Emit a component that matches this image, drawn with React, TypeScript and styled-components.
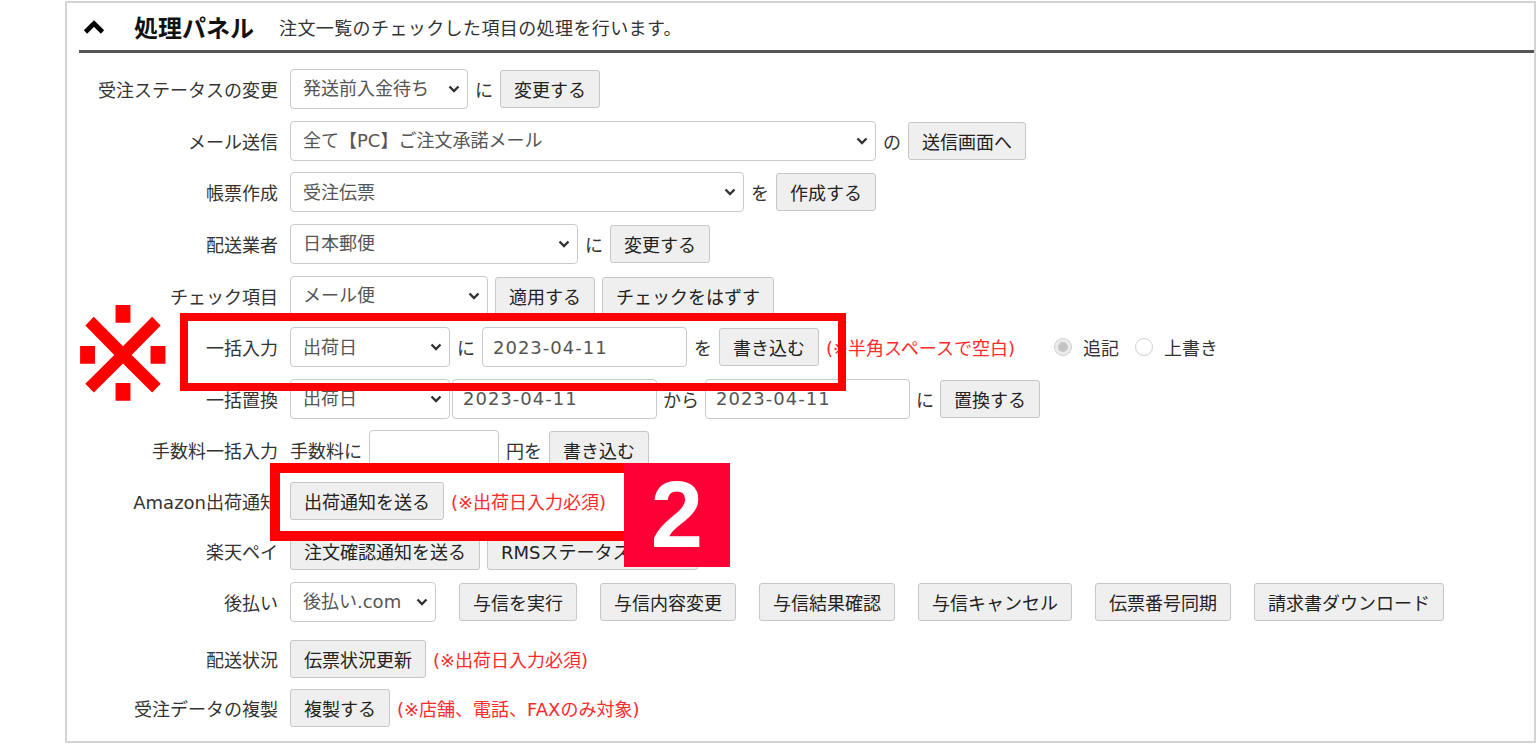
import React from 'react';
import styled, { createGlobalStyle } from 'styled-components';

const GlobalStyle = createGlobalStyle`
  html, body {
    margin: 0;
    padding: 0;
    background: #fff;
  }
  body {
    font-family: 'DejaVu Sans', 'Noto Sans CJK JP', sans-serif;
    font-size: 18px;
    color: #333;
  }
`;

const Page = styled.div`
  position: relative;
  width: 1536px;
  height: 744px;
  padding: 1px 0 0 65px;
  box-sizing: border-box;
  overflow: hidden;
`;

const Panel = styled.section`
  width: 1471px;
  height: 742px;
  box-sizing: border-box;
  border: 2px solid #d4d4d4;
`;

const Header = styled.div`
  display: flex;
  align-items: center;
  height: 47px;
  margin-left: 12px;
  padding-left: 4px;
  border-bottom: 3px solid #555;
`;

const Title = styled.h2`
  margin: 0 0 0 29px;
  font-family: 'Noto Sans CJK JP', sans-serif;
  font-size: 24px;
  font-weight: 700;
  color: #111;
`;

const SubTitle = styled.span`
  margin-left: 25px;
  font-size: 18px;
  letter-spacing: 0.4px;
  color: #333;
`;

const Body = styled.div`
  padding-top: 10px;
`;

const Row = styled.div<{ $h: number; $pb?: number }>`
  display: flex;
  align-items: center;
  height: ${(p) => p.$h}px;
  padding-bottom: ${(p) => p.$pb || 0}px;
`;

const Label = styled.div`
  width: 211px;
  flex-shrink: 0;
  margin-right: 12px;
  text-align: right;
  white-space: nowrap;
  color: #333;
`;

const Content = styled.div<{ $gap?: number }>`
  display: flex;
  align-items: center;
  gap: ${(p) => p.$gap ?? 7}px;
  white-space: nowrap;
`;

const Pair = styled.div`
  display: flex;
  align-items: center;
  gap: 2px;
`;

const SelectWrap = styled.div<{ $w: number }>`
  position: relative;
  width: ${(p) => p.$w}px;
  height: 40px;
  flex-shrink: 0;
`;

const Select = styled.select`
  appearance: none;
  width: 100%;
  height: 100%;
  box-sizing: border-box;
  padding: 0 30px 0 12px;
  border: 1px solid #c9c9c9;
  border-radius: 4px;
  background: #fff;
  font: inherit;
  color: #555;
`;

const Caret = styled.svg`
  position: absolute;
  right: 8px;
  top: 50%;
  margin-top: -4px;
  pointer-events: none;
`;

const Input = styled.input<{ $w: number }>`
  width: ${(p) => p.$w}px;
  height: 40px;
  box-sizing: border-box;
  padding: 0 10px;
  border: 1px solid #c9c9c9;
  border-radius: 4px;
  font: inherit;
  letter-spacing: 1px;
  color: #555;
  flex-shrink: 0;
`;

const Button = styled.button`
  height: 38px;
  padding: 0 13px;
  border: 1px solid #c6c6c6;
  border-radius: 3px;
  background: #efefef;
  font: inherit;
  color: #222;
  flex-shrink: 0;
`;

const Word = styled.span`
  color: #333;
`;

const Note = styled.span`
  color: #ff2a2a;
`;

const RadioGroup = styled.div`
  display: flex;
  align-items: center;
  gap: 16px;
  margin-left: 32px;
`;

const RadioLabel = styled.label`
  display: flex;
  align-items: center;
  gap: 11px;
  color: #333;
`;

const RadioDot = styled.span<{ $checked?: boolean }>`
  position: relative;
  width: 18px;
  height: 18px;
  box-sizing: border-box;
  border-radius: 50%;
  border: 1px solid #cfcfcf;
  background: ${(p) => (p.$checked ? '#ececec' : '#fff')};

  &::after {
    content: '';
    display: ${(p) => (p.$checked ? 'block' : 'none')};
    position: absolute;
    left: 3px;
    top: 3px;
    width: 10px;
    height: 10px;
    border-radius: 50%;
    background: #c4c4c4;
  }
`;

const Mark = styled.div`
  position: absolute;
  left: 58px;
  top: 290px;
  width: 130px;
  height: 130px;
  display: flex;
  align-items: center;
  justify-content: center;
  font-family: 'DejaVu Sans', sans-serif;
  font-size: 130px;
  font-weight: 400;
  line-height: 1;
  color: #ff0000;
  -webkit-text-stroke: 1.5px #ff0000;
`;

const Frame = styled.div<{ $x: number; $y: number; $w: number; $h: number; $b: number }>`
  position: absolute;
  left: ${(p) => p.$x}px;
  top: ${(p) => p.$y}px;
  width: ${(p) => p.$w}px;
  height: ${(p) => p.$h}px;
  box-sizing: border-box;
  border: ${(p) => p.$b}px solid #ff0000;
`;

const Badge = styled.div`
  position: absolute;
  left: 624px;
  top: 463px;
  width: 106px;
  height: 104px;
  display: flex;
  align-items: center;
  justify-content: center;
  background: #ff0036;
  color: #fff;
  font-family: 'Liberation Sans', Arial, sans-serif;
  font-weight: 700;
  font-size: 94px;
  line-height: 1;
`;

const Dropdown: React.FC<{ w: number; value: string }> = ({ w, value }) => (
  <SelectWrap $w={w}>
    <Select defaultValue={value}>
      <option>{value}</option>
    </Select>
    <Caret width="12" height="8" viewBox="0 0 12 8">
      <polyline points="1.5,1.5 6,6 10.5,1.5" fill="none" stroke="#333" strokeWidth="2.4" />
    </Caret>
  </SelectWrap>
);

const ChevronUp = () => (
  <svg width="22" height="16" viewBox="0 0 22 16">
    <polyline points="2.5,13 11,4.5 19.5,13" fill="none" stroke="#000" strokeWidth="4.6" />
  </svg>
);

const creditButtons = ['与信を実行', '与信内容変更', '与信結果確認', '与信キャンセル', '伝票番号同期', '請求書ダウンロード'];

export default function App() {
  return (
    <>
      <GlobalStyle />
      <Page>
        <Panel>
          <Header>
            <ChevronUp />
            <Title>処理パネル</Title>
            <SubTitle>注文一覧のチェックした項目の処理を行います。</SubTitle>
          </Header>
          <Body>
            <Row $h={51.7}>
              <Label>受注ステータスの変更</Label>
              <Content>
                <Dropdown w={178} value="発送前入金待ち" />
                <Word>に</Word>
                <Button>変更する</Button>
              </Content>
            </Row>
            <Row $h={51.7}>
              <Label>メール送信</Label>
              <Content>
                <Dropdown w={586} value="全て【PC】ご注文承諾メール" />
                <Word>の</Word>
                <Button>送信画面へ</Button>
              </Content>
            </Row>
            <Row $h={51.7}>
              <Label>帳票作成</Label>
              <Content>
                <Dropdown w={454} value="受注伝票" />
                <Word>を</Word>
                <Button>作成する</Button>
              </Content>
            </Row>
            <Row $h={51.7}>
              <Label>配送業者</Label>
              <Content>
                <Dropdown w={288} value="日本郵便" />
                <Word>に</Word>
                <Button>変更する</Button>
              </Content>
            </Row>
            <Row $h={51.7}>
              <Label>チェック項目</Label>
              <Content>
                <Dropdown w={198} value="メール便" />
                <Button>適用する</Button>
                <Button>チェックをはずす</Button>
              </Content>
            </Row>
            <Row $h={51.7}>
              <Label>一括入力</Label>
              <Content>
                <Dropdown w={160} value="出荷日" />
                <Word>に</Word>
                <Input $w={205} defaultValue="2023-04-11" />
                <Word>を</Word>
                <Button>書き込む</Button>
                <Note>(※半角スペースで空白)</Note>
                <RadioGroup>
                  <RadioLabel>
                    <RadioDot $checked />
                    追記
                  </RadioLabel>
                  <RadioLabel>
                    <RadioDot />
                    上書き
                  </RadioLabel>
                </RadioGroup>
              </Content>
            </Row>
            <Row $h={51.7}>
              <Label>一括置換</Label>
              <Content $gap={6}>
                <Pair>
                  <Dropdown w={160} value="出荷日" />
                  <Input $w={205} defaultValue="2023-04-11" />
                </Pair>
                <Word>から</Word>
                <Input $w={205} defaultValue="2023-04-11" />
                <Word>に</Word>
                <Button>置換する</Button>
              </Content>
            </Row>
            <Row $h={50.5}>
              <Label>手数料一括入力</Label>
              <Content>
                <Word>手数料に</Word>
                <Input $w={130} defaultValue="" />
                <Word>円を</Word>
                <Button>書き込む</Button>
              </Content>
            </Row>
            <Row $h={50.5}>
              <Label>Amazon出荷通知</Label>
              <Content>
                <Button>出荷通知を送る</Button>
                <Note>(※出荷日入力必須)</Note>
              </Content>
            </Row>
            <Row $h={50.5}>
              <Label>楽天ペイ</Label>
              <Content>
                <Button>注文確認通知を送る</Button>
                <Button>RMSステータスを送る</Button>
              </Content>
            </Row>
            <Row $h={50.5} $pb={7.6}>
              <Label>後払い</Label>
              <Content $gap={23}>
                <Dropdown w={146} value="後払い.com" />
                {creditButtons.map((b) => (
                  <Button key={b}>{b}</Button>
                ))}
              </Content>
            </Row>
            <Row $h={49}>
              <Label>配送状況</Label>
              <Content>
                <Button>伝票状況更新</Button>
                <Note>(※出荷日入力必須)</Note>
              </Content>
            </Row>
            <Row $h={49}>
              <Label>受注データの複製</Label>
              <Content>
                <Button>複製する</Button>
                <Note>(※店舗、電話、FAXのみ対象)</Note>
              </Content>
            </Row>
          </Body>
        </Panel>

        <Mark>※</Mark>
        <Frame $x={180} $y={313} $w={666} $h={78} $b={8} />
        <Frame $x={270} $y={463} $w={370} $h={78} $b={10} />
        <Badge>2</Badge>
      </Page>
    </>
  );
}
